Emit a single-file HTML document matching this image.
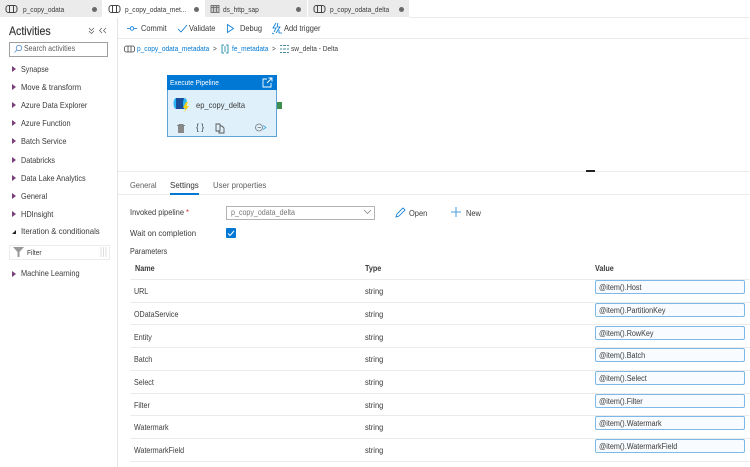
<!DOCTYPE html>
<html><head><meta charset="utf-8"><style>
html,body{margin:0;padding:0;background:#fff}
#r{position:relative;width:750px;height:467px;overflow:hidden;background:#fff;font-family:"Liberation Sans",sans-serif;font-size:8.3px;color:#3b3a39;filter:blur(.35px)}
#r div,#r svg{position:absolute}
.t{white-space:nowrap;line-height:12px;height:12px;transform:scaleX(.9);transform-origin:0 50%}
.l{height:1px;background:#edebe9}
.tab{top:0;height:17px;background:#ebebeb}
.tt{font-size:7.300px;top:4px}
.bc{font-size:7.300px;top:43px}
.sb{font-size:8.200px;left:21px}
.n{font-size:8.300px;left:134px;transform:scaleX(.86)}
.s{left:365px}
.h{font-weight:bold;font-size:8px;top:263px}
.dot{width:5px;height:5px;border-radius:50%;background:#69696b;top:7px}
.inp{left:595px;width:145px;padding-left:3px;height:12px;border:1px solid #7db9e8;border-radius:2px;background:#f8fbff;line-height:13px;font-size:8px;white-space:nowrap}
.inp span{display:inline-block;transform:scaleX(.9);transform-origin:0 50%}
.arr{left:12px;width:0;height:0;border-left:4px solid #7a3f7a;border-top:3px solid transparent;border-bottom:3px solid transparent}
</style></head><body><div id="r">
<div class="tab" style="left:0;width:102px"></div>
<div class="tab" style="left:205px;width:102px"></div>
<div class="tab" style="left:308px;width:101px"></div>
<svg style="left:5px;top:4px" width="13" height="10" fill="none" stroke="#444"><rect x="1" y="1.500" width="11" height="7" rx="2.500"/><path d="M4.500 1.500V8.500M8.500 1.500V8.500"/></svg>
<svg style="left:108px;top:4px" width="13" height="10" fill="none" stroke="#444"><rect x="1" y="1.500" width="11" height="7" rx="2.500"/><path d="M4.500 1.500V8.500M8.500 1.500V8.500"/></svg>
<svg style="left:210px;top:4px" width="10" height="10" fill="none" stroke="#777"><rect x="1" y="1.500" width="8" height="7" fill="#ccc"/><path d="M1 3.500H9M3.500 1.500V8.500M6.500 1.500V8.500"/></svg>
<svg style="left:313px;top:4px" width="13" height="10" fill="none" stroke="#444"><rect x="1" y="1.500" width="11" height="7" rx="2.500"/><path d="M4.500 1.500V8.500M8.500 1.500V8.500"/></svg>
<div class="t tt" style="left:23px">p_copy_odata</div>
<div class="t tt" style="left:125px">p_copy_odata_met...</div>
<div class="t tt" style="left:223px">ds_http_sap</div>
<div class="t tt" style="left:330px">p_copy_odata_delta</div>
<div class="dot" style="left:92px"></div><div class="dot" style="left:194px"></div><div class="dot" style="left:296px"></div><div class="dot" style="left:399px"></div>
<div class="l" style="left:409px;top:17px;width:341px"></div>
<div class="l" style="left:117px;top:38px;width:633px"></div>
<div style="left:117px;top:18px;width:1px;height:449px;background:#e4e4e4"></div>

<div class="t" style="left:9px;top:24px;font-size:12px;line-height:14px;height:14px;color:#323130;transform:scaleX(.88);-webkit-text-stroke:.15px #323130">Activities</div>
<svg style="left:88px;top:27px" width="20" height="8" fill="none" stroke="#555" stroke-width=".7"><path d="M1 1L3.500 3.500L6 1M1 4L3.500 6.500L6 4M14 1L11.500 3.500L14 6M18 1L15.500 3.500L18 6"/></svg>
<div style="left:9px;top:42px;width:97px;height:13px;border:1px solid #a19f9d"></div>
<svg style="left:13px;top:44px" width="10" height="10" fill="none" stroke="#5b8fc7" stroke-width=".8"><circle cx="6" cy="4" r="2.700"/><path d="M4 6L1.500 8.500"/></svg>
<div class="t" style="left:24px;top:43px;color:#605e5c;font-size:7.800px">Search activities</div>

<div class="arr" style="top:66px"></div><div class="t sb" style="top:64px;transform:scaleX(.87)">Synapse</div>
<div class="arr" style="top:84px"></div><div class="t sb" style="top:82px;transform:scaleX(.93)">Move &amp; transform</div>
<div class="arr" style="top:102px"></div><div class="t sb" style="top:100px">Azure Data Explorer</div>
<div class="arr" style="top:120px"></div><div class="t sb" style="top:118px">Azure Function</div>
<div class="arr" style="top:138px"></div><div class="t sb" style="top:136px">Batch Service</div>
<div class="arr" style="top:157px"></div><div class="t sb" style="top:155px;transform:scaleX(.88)">Databricks</div>
<div class="arr" style="top:175px"></div><div class="t sb" style="top:173px">Data Lake Analytics</div>
<div class="arr" style="top:193px"></div><div class="t sb" style="top:191px">General</div>
<div class="arr" style="top:211px"></div><div class="t sb" style="top:209px">HDInsight</div>
<svg style="left:11px;top:229px" width="6" height="6"><path d="M5 1V5H1Z" fill="#222"/></svg>
<div class="t sb" style="top:226px;transform:scaleX(.95)">Iteration &amp; conditionals</div>
<div style="left:9px;top:245px;width:99px;height:13px;border:1px solid #ececec"></div>
<svg style="left:12px;top:246px" width="13" height="12"><path d="M1 1H12L7.500 6V11H5.500V6Z" fill="#999"/></svg>
<svg style="left:100px;top:246px" width="7" height="12" stroke="#ddd" fill="none"><path d="M1 1V11M3.500 1V11M6 1V11"/></svg>
<div class="t" style="left:27px;top:247px;font-size:7.300px">Filter</div>
<div class="arr" style="top:271px"></div><div class="t sb" style="top:268px">Machine Learning</div>

<svg style="left:127px;top:24px" width="10" height="9" fill="none" stroke="#0078d4" stroke-width=".8"><circle cx="5" cy="4.500" r="1.800"/><path d="M0 4.500H3M7 4.500H10"/></svg>
<div class="t" style="left:141px;top:22px">Commit</div>
<svg style="left:177px;top:24px" width="11" height="9" fill="none" stroke="#0078d4" stroke-width=".8"><path d="M1 5L4 8L10 1"/></svg>
<div class="t" style="left:189px;top:22px">Validate</div>
<svg style="left:226px;top:23px" width="9" height="11" fill="none" stroke="#0078d4" stroke-width=".8"><path d="M1.500 1.500L7.500 5.500L1.500 9.500Z"/></svg>
<div class="t" style="left:240px;top:22px">Debug</div>
<svg style="left:271px;top:22px" width="11" height="13" fill="none" stroke="#0078d4" stroke-width=".8"><path d="M5 1L2 6H5L3 10M7 1L6 5H9L5 11M1 11L3 12M8 8V11H11"/></svg>
<div class="t" style="left:284px;top:22px">Add trigger</div>

<svg style="left:124px;top:45px" width="11" height="8" fill="none" stroke="#444" stroke-width=".8"><rect x=".5" y="1" width="10" height="6" rx="2"/><path d="M4 1V7M7 1V7"/></svg>
<div class="t bc" style="left:137px;color:#0078d4">p_copy_odata_metadata</div>
<div class="t bc" style="left:213px">&gt;</div>
<svg style="left:221px;top:44px" width="8" height="10" fill="none" stroke="#0078a0" stroke-width=".8"><path d="M3 1H1V9H3M5 1H7V9H5M3 3H5M3 5H5M3 7H5"/></svg>
<div class="t bc" style="left:232px;color:#0078d4">fe_metadata</div>
<div class="t bc" style="left:272px">&gt;</div>
<svg style="left:280px;top:44px" width="9" height="10" fill="none" stroke="#0d6a80" stroke-width=".8"><path d="M0 1.500H2M3 1.500H6M7 1.500H9M0 5H2M3 5H6M7 5H9M0 8.500H2M3 8.500H6M7 8.500H9"/></svg>
<div class="t bc" style="left:291px">sw_delta - Delta</div>

<div style="left:167px;top:75px;width:108px;height:60px;border:1px solid #5ea3d6;background:#dff0fb"></div>
<div style="left:167px;top:75px;width:110px;height:15px;background:#0078d4"></div>
<div class="t" style="left:170px;top:77px;color:#fff;font-size:7.300px">Execute Pipeline</div>
<svg style="left:262px;top:77px" width="11" height="11" fill="none" stroke="#fff" stroke-width=".9"><path d="M5 2H1V10H9V6M5 6L10 1M6.500 1H10V4.500"/></svg>
<svg style="left:173px;top:97px" width="18" height="16"><ellipse cx="3" cy="6.500" rx="2.500" ry="5.500" fill="#29b6f6"/><rect x="3" y="1" width="8" height="11" fill="#1a4f9c"/><ellipse cx="12" cy="6.500" rx="2" ry="5.500" fill="#29b6f6"/><path d="M13 5L10 11H12.500L11 15.500L16 9H13.500L15 5Z" fill="#fcd116"/></svg>
<div class="t" style="left:196px;top:99px;font-size:8.400px">ep_copy_delta</div>
<svg style="left:176px;top:123px" width="10" height="11" fill="none" stroke="#666"><path d="M1 2.500H9M3 2.500V1.500H7V2.500" stroke-width=".8"/><rect x="2" y="3" width="6" height="7" fill="#888" stroke="none"/></svg>
<div class="t" style="left:196px;top:122px;font-size:9.500px;color:#444">{ }</div>
<svg style="left:215px;top:123px" width="10" height="11" fill="none" stroke="#555" stroke-width=".9"><path d="M1 1H5V8H1ZM5 3H7L9 5V10H4V8"/></svg>
<svg style="left:254px;top:123px" width="13" height="9" fill="none" stroke="#777" stroke-width=".8"><circle cx="5" cy="4.500" r="3.500"/><path d="M3.500 4.500H7"/><path d="M9 2.500L12 4.500L9 6.500" stroke="#3ba7e0"/></svg>
<div style="left:277px;top:102px;width:5px;height:7px;background:#3e8e4e"></div>

<div class="l" style="left:118px;top:171px;width:632px"></div>
<div style="left:586px;top:170px;width:9px;height:2px;background:#222"></div>
<div class="t" style="left:130px;top:179px;color:#605e5c">General</div>
<div class="t" style="left:170px;top:179px;color:#323130;transform:scaleX(.96)">Settings</div>
<div class="t" style="left:213px;top:179px;color:#605e5c;transform:scaleX(.94)">User properties</div>
<div class="l" style="left:118px;top:194px;width:632px"></div>
<div style="left:170px;top:193px;width:29px;height:2px;background:#0078d4"></div>

<div class="t" style="left:130px;top:206px">Invoked pipeline <span style="color:#c33">*</span></div>
<div style="left:226px;top:206px;width:147px;height:12px;border:1px solid #b5b3b1"></div>
<div class="t" style="left:231px;top:207px;color:#777;font-size:7.900px">p_copy_odata_delta</div>
<svg style="left:363px;top:209px" width="9" height="6" fill="none" stroke="#888" stroke-width=".8"><path d="M1 1L4.500 4.500L8 1"/></svg>
<svg style="left:395px;top:207px" width="11" height="11" fill="none" stroke="#0078d4" stroke-width=".8"><path d="M1 10L2 7L8 1L10 3L4 9Z"/></svg>
<div class="t" style="left:409px;top:207px">Open</div>
<svg style="left:451px;top:207px" width="10" height="10" stroke="#4a9bd9"><path d="M5 0V10M0 5H10"/></svg>
<div class="t" style="left:466px;top:207px">New</div>

<div class="t" style="left:130px;top:227px;transform:scaleX(.94)">Wait on completion</div>
<div style="left:226px;top:228px;width:10px;height:10px;background:#0078d4;border-radius:1px"></div>
<svg style="left:226px;top:228px" width="10" height="10" fill="none" stroke="#fff"><path d="M2 5.500L4 7.500L8 3"/></svg>
<div class="t" style="left:130px;top:246px;font-size:8px">Parameters</div>
<div class="t h" style="left:135px">Name</div>
<div class="t h" style="left:365px">Type</div>
<div class="t h" style="left:595px">Value</div>

<div class="l" style="left:130px;top:279px;width:620px"></div>
<div class="l" style="left:130px;top:302px;width:620px"></div>
<div class="l" style="left:130px;top:324px;width:620px"></div>
<div class="l" style="left:130px;top:347px;width:620px"></div>
<div class="l" style="left:130px;top:370px;width:620px"></div>
<div class="l" style="left:130px;top:393px;width:620px"></div>
<div class="l" style="left:130px;top:415px;width:620px"></div>
<div class="l" style="left:130px;top:438px;width:620px"></div>
<div class="l" style="left:130px;top:461px;width:620px"></div>

<div class="t n" style="top:285px">URL</div><div class="t s" style="top:285px">string</div><div class="inp" style="top:280px"><span>@item().Host</span></div>
<div class="t n" style="top:308px">ODataService</div><div class="t s" style="top:308px">string</div><div class="inp" style="top:303px"><span>@item().PartitionKey</span></div>
<div class="t n" style="top:331px">Entity</div><div class="t s" style="top:331px">string</div><div class="inp" style="top:326px"><span>@item().RowKey</span></div>
<div class="t n" style="top:353px">Batch</div><div class="t s" style="top:353px">string</div><div class="inp" style="top:348px"><span>@item().Batch</span></div>
<div class="t n" style="top:376px">Select</div><div class="t s" style="top:376px">string</div><div class="inp" style="top:371px"><span>@item().Select</span></div>
<div class="t n" style="top:399px">Filter</div><div class="t s" style="top:399px">string</div><div class="inp" style="top:394px"><span>@item().Filter</span></div>
<div class="t n" style="top:421px">Watermark</div><div class="t s" style="top:421px">string</div><div class="inp" style="top:416px"><span>@item().Watermark</span></div>
<div class="t n" style="top:444px">WatermarkField</div><div class="t s" style="top:444px">string</div><div class="inp" style="top:439px"><span>@item().WatermarkField</span></div>
</div></body></html>
